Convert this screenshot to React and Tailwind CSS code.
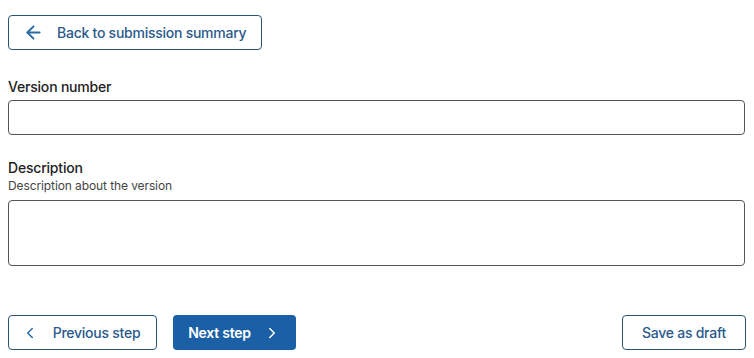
import { ArrowLeft, ChevronLeft, ChevronRight } from "lucide-react";

export default function App() {
  return (
    <div className="min-h-screen w-full bg-white px-2 pt-[15px] font-['Inter',sans-serif] text-[#1f2328]">
      <button className="flex h-[35px] w-[254px] items-center gap-[13px] rounded-[4px] border border-[#2b5577] pl-[14px] text-[14px] font-medium tracking-[-0.25px] text-[#2a5a8c]">
        <ArrowLeft size={21} strokeWidth={2.2} className="text-[#2a6aa5]" />
        <span>Back to submission summary</span>
      </button>

      <div className="mt-[28px]">
        <label className="block text-[14px] font-medium leading-[18px] tracking-[-0.2px] text-[#222]">Version number</label>
        <input className="mt-[4px] block h-[35px] w-[737px] rounded-[4px] border border-[#555] bg-white px-2 outline-none" />
      </div>

      <div className="mt-[24px]">
        <label className="block text-[14px] font-medium leading-[18px] tracking-[-0.2px] text-[#222]">Description</label>
        <p className="mt-[2px] text-[12px] leading-[14px] tracking-[-0.1px] text-[#444]">Description about the version</p>
        <textarea className="mt-[7px] block h-[66px] w-[737px] resize-none rounded-[4px] border border-[#555] bg-white px-2 outline-none" />
      </div>

      <div className="mt-[49px] flex items-center">
        <button className="flex h-[35px] w-[149px] items-center justify-center gap-[14px] rounded-[4px] border border-[#2b5577] pr-[4px] text-[14px] font-medium tracking-[-0.25px] text-[#2a5a8c]">
          <ChevronLeft size={18} strokeWidth={2} className="text-[#2a6aa5]" />
          <span>Previous step</span>
        </button>
        <button className="ml-4 flex h-[35px] w-[123px] items-center justify-center gap-[12px] rounded-[4px] bg-[#1b5fa6] text-[14px] font-semibold tracking-[-0.25px] text-white">
          <span>Next step</span>
          <ChevronRight size={18} strokeWidth={2} />
        </button>
        <button className="ml-auto flex h-[35px] w-[124px] items-center justify-center rounded-[4px] border border-[#2b5577] text-[14px] font-medium tracking-[-0.25px] text-[#2a5a8c]">
          Save as draft
        </button>
      </div>
    </div>
  );
}
